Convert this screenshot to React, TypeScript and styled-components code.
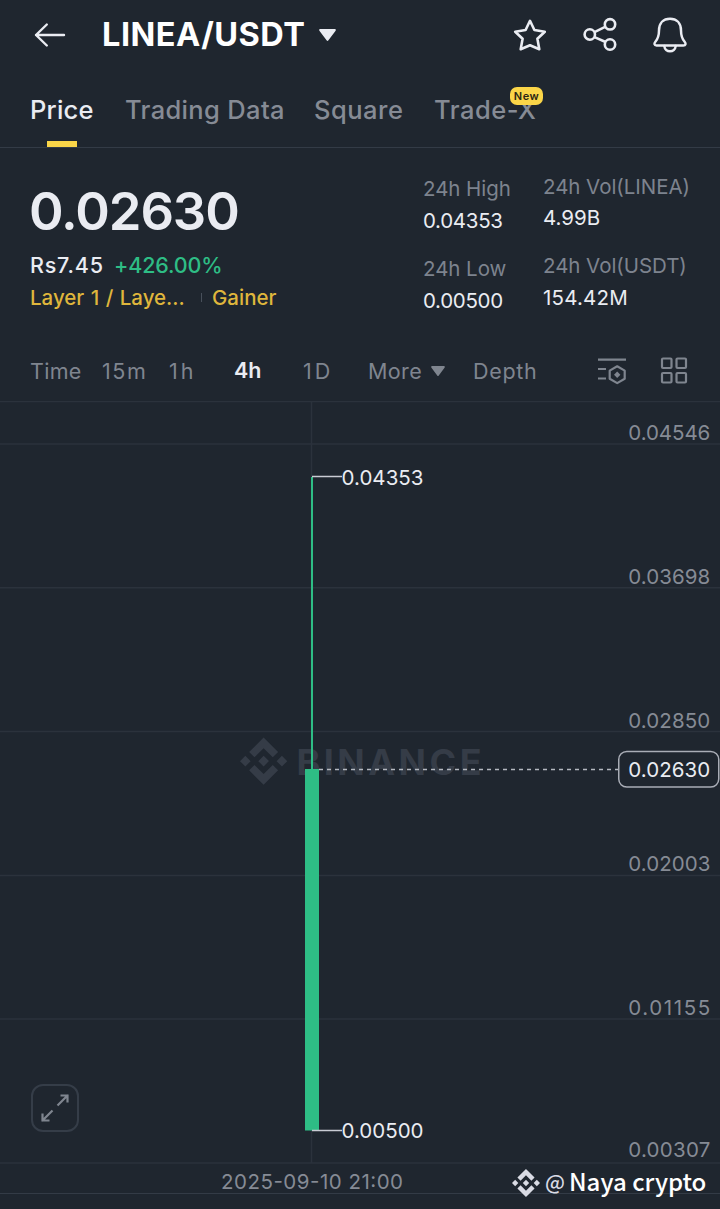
import React from "react";
import styled, { createGlobalStyle } from "styled-components";

const c = {
  bg: "#1f262f",
  text: "#eaecf2",
  muted: "#868b95",
  line: "#2b323c",
  border: "#333b46",
  green: "#2ebd85",
  yellow: "#fad548",
  gold: "#dfb63c",
};

const GlobalStyle = createGlobalStyle`
  * { box-sizing: border-box; }
  body { margin: 0; background: ${c.bg}; }
`;

const Screen = styled.main`
  width: 720px;
  height: 1209px;
  overflow: hidden;
  display: flex;
  flex-direction: column;
  background: ${c.bg};
  color: ${c.text};
  font-family: Inter, "Liberation Sans", sans-serif;
  white-space: nowrap;
`;

const Header = styled.header`
  height: 70px;
  flex: none;
  display: flex;
  align-items: center;
  padding: 0 32px 0 33px;
`;

const Title = styled.h1`
  margin: 0 0 0 35px;
  width: 217px;
  color: #fff;
  font-size: 32.5px;
  line-height: 70px;
  font-weight: 650;
  letter-spacing: 0.5px;
`;

const HeaderActions = styled.div`
  margin-left: auto;
  display: flex;
  gap: 34px;
`;

const Tabs = styled.nav`
  height: 78px;
  flex: none;
  display: grid;
  grid-template-columns: 95px 189px 120px auto;
  padding-left: 30px;
  border-bottom: 1px solid ${c.border};
`;

const Tab = styled.a<{ $active?: boolean; $track?: number }>`
  position: relative;
  justify-self: start;
  font-size: 25.5px;
  line-height: 80px;
  font-weight: 500;
  letter-spacing: ${(p) => p.$track ?? 0}px;
  color: ${(p) => (p.$active ? c.text : c.muted)};
`;

const TabMarker = styled.span`
  position: absolute;
  left: 17px;
  bottom: 3px;
  width: 30px;
  height: 6px;
  background: ${c.yellow};
`;

const NewBadge = styled.span`
  position: absolute;
  left: 76px;
  top: 17px;
  width: 33px;
  height: 18px;
  border-radius: 7px;
  background: ${c.yellow};
  color: #2a2614;
  font-size: 11px;
  line-height: 18px;
  font-weight: 600;
  letter-spacing: 0.5px;
  text-align: center;
`;

const Summary = styled.section`
  height: 192px;
  flex: none;
  display: grid;
  grid-template-columns: 393px 120px auto;
  padding-left: 30px;
`;

const PriceColumn = styled.div`
  display: flex;
  flex-direction: column;
  padding-top: 31px;
`;

const LastPrice = styled.div`
  font-size: 52.5px;
  line-height: 64px;
  font-weight: 600;
  letter-spacing: -1.1px;
  margin-left: -1px;
`;

const FiatRow = styled.div`
  display: grid;
  grid-template-columns: 84px auto;
  margin-top: 6px;
  font-size: 21.5px;
  line-height: 32px;
  font-weight: 500;
`;

const Fiat = styled.span`
  letter-spacing: 0.8px;
`;

const Change = styled.span`
  color: ${c.green};
  letter-spacing: -0.15px;
`;

const TagRow = styled.div`
  display: grid;
  grid-template-columns: 171px 11px auto;
  align-items: center;
  color: ${c.gold};
  font-size: 20.5px;
  line-height: 33px;
  font-weight: 500;
  word-spacing: 1px;
`;

const TagDivider = styled.i`
  width: 1px;
  height: 9px;
  background: #48505b;
`;

const StatColumn = styled.dl<{ $top: number; $gap: number }>`
  margin: 0;
  padding-top: ${(p) => p.$top}px;
  display: flex;
  flex-direction: column;
  gap: ${(p) => p.$gap}px;
`;

const StatLabel = styled.dt<{ $height?: number }>`
  color: #7d838e;
  font-size: 20.5px;
  line-height: ${(p) => p.$height ?? 32}px;
  letter-spacing: -0.05px;
`;

const StatValue = styled.dd<{ $track?: number; $height?: number }>`
  margin: 0;
  font-size: 20.5px;
  line-height: ${(p) => p.$height ?? 31}px;
  letter-spacing: ${(p) => p.$track ?? 0}px;
`;

const Intervals = styled.div`
  height: 61px;
  flex: none;
  display: grid;
  grid-template-columns: 72px 67px 65px 69px 65px 105px 124px 63px auto;
  align-items: center;
  padding-left: 30px;
`;

const Interval = styled.button<{ $active?: boolean; $track?: number }>`
  display: flex;
  align-items: center;
  gap: 9px;
  padding: 0 0 ${(p) => (p.$active ? 2 : 0)}px;
  border: 0;
  background: none;
  font-family: inherit;
  font-size: 21.5px;
  line-height: 40px;
  font-weight: ${(p) => (p.$active ? 600 : 400)};
  letter-spacing: ${(p) => p.$track ?? 0}px;
  color: ${(p) => (p.$active ? c.text : "#7f858f")};
`;

const ChartArea = styled.section`
  position: relative;
  height: 808px;
  flex: none;
`;

const ExpandButton = styled.button`
  position: absolute;
  left: 31px;
  top: 683px;
  width: 48px;
  height: 48px;
  padding: 0;
  display: grid;
  place-items: center;
  border: 2px solid #353d48;
  border-radius: 12px;
  background: none;
`;

const Credit = styled.div`
  position: absolute;
  left: 512px;
  top: 762px;
  height: 40px;
  display: flex;
  align-items: center;
  color: #fff;
  font-family: "Noto Sans CJK SC", "Noto Sans", sans-serif;
  font-size: 24px;
  font-weight: 500;
`;

const CreditAt = styled.span`
  width: 24px;
  margin-left: 5px;
  padding-bottom: 3px;
  font-size: 20.5px;
  line-height: 37px;
  color: #d9dbe4;
`;

const CreditName = styled.span`
  padding-bottom: 4px;
  line-height: 36px;
`;

const BINANCE_MARK =
  "M16.624 13.9202l2.7175 2.7154-7.353 7.353-7.353-7.352 2.7175-2.7164 4.6355 4.6595 4.6356-4.6595zm4.6366-4.6366L24 12l-2.7154 2.7164L18.5682 12l2.6924-2.7164zm-9.272.001l2.7163 2.6914-2.7164 2.7174v-.001L9.2721 12l2.7164-2.7154zm-9.2722-.001L5.4088 12l-2.6914 2.6924L0 12l2.7164-2.7164zM11.9885.0115l7.353 7.329-2.7174 2.7154-4.6356-4.6356-4.6355 4.6595-2.7174-2.7154 7.353-7.353z";

const BackIcon = () => (
  <svg width="34" height="30" viewBox="0 0 34 30" fill="none" stroke={c.text} strokeWidth="2.4" strokeLinecap="round" strokeLinejoin="round">
    <path d="M13.800 4.500L3 15L13.800 25.500M3 15H31" />
  </svg>
);

const StarIcon = () => (
  <svg width="36" height="36" viewBox="0 -0.8 36 36" fill="none" stroke={c.text} strokeWidth="2.600" strokeLinejoin="round">
    <path d="M18 4L22.400 13.200L32.800 14.900L25.400 22L27.300 32.400L18 28.400L8.700 32.400L10.600 22L3.200 14.900L13.600 13.200Z" />
  </svg>
);

const ShareIcon = () => (
  <svg width="36" height="36" viewBox="0 -0.5 36 36" fill="none" stroke={c.text} strokeWidth="2.600">
    <circle cx="7.800" cy="18" r="5.200" />
    <circle cx="28" cy="7.800" r="5.200" />
    <circle cx="28" cy="28" r="5.200" />
    <path d="M12.500 15.600L23.600 10.200M12.500 20.600L23.600 25.500" />
  </svg>
);

const BellIcon = () => (
  <svg width="36" height="38" viewBox="0 0 36 38" fill="none" stroke={c.text} strokeWidth="2.500" strokeLinejoin="round" strokeLinecap="round">
    <path d="M4.500 29.500H31.300C33.800 29.500 34 27.400 32.800 26C30 22.800 29 19.500 29 14.500C29 7 24.600 2.800 18 2.800S7 7 7 14.500C7 19.500 6 22.800 3.200 26C2 27.400 2.200 29.500 4.500 29.500Z" />
    <path d="M12.300 30C12.900 37 23.100 37 23.700 30" />
  </svg>
);

const Caret = ({ w, h, color }: { w: number; h: number; color: string }) => (
  <svg width={w} height={h} viewBox="0 0 18 12" preserveAspectRatio="none">
    <path d="M1.500 0H16.500C17.800 0 18.200 1 17.400 2L10 11.300C9.400 12.100 8.600 12.100 8 11.300L0.600 2C-0.200 1 0.200 0 1.500 0Z" fill={color} />
  </svg>
);

const IndicatorIcon = () => (
  <svg width="30" height="28" viewBox="0 0 30 28" fill="none" stroke="#7f858f" strokeWidth="2.200">
    <path d="M1 2.700H29M1 12H9M1 21.500H9" />
    <path d="M20.200 9.300L27.700 13.600V21.800L20.200 26.100L12.700 21.800V13.600Z" strokeLinejoin="round" />
    <path d="M20.200 14.500L23.400 17.700L20.200 20.900L17 17.700Z" fill="#7f858f" stroke="none" />
  </svg>
);

const GridIcon = () => (
  <svg width="28" height="28" viewBox="0 0.500 28 28" fill="none" stroke="#7f858f" strokeWidth="2.200">
    <rect x="2" y="2" width="9.500" height="9.500" rx="1" />
    <rect x="16.500" y="2" width="9.500" height="9.500" rx="1" />
    <rect x="2" y="16.500" width="9.500" height="9.500" rx="1" />
    <rect x="16.500" y="16.500" width="9.500" height="9.500" rx="1" />
  </svg>
);

const ExpandIcon = () => (
  <svg width="30" height="30" viewBox="0 0 30 30" fill="none" stroke="#7f858f" strokeWidth="2.200">
    <path d="M17.500 12.500L28 2M20.500 2.500H27.500V9.500M12.500 17.500L2 28M2.500 20.500V27.500H9.500" />
  </svg>
);

/* Axis rows: label, gridline y and text baseline, measured from the chart's top edge. */
const axis = [
  { label: "0.04546", line: 43, base: 38.800 },
  { label: "0.03698", line: 186.700, base: 182.800 },
  { label: "0.02850", line: 330.500, base: 327 },
  { label: "0.02003", line: 474.500, base: 469.900 },
  { label: "0.01155", line: 618, base: 613.800 },
  { label: "0.00307", line: 762, base: 755.800 },
];

const PriceChart = () => (
  <svg width="720" height="808" viewBox="0 0 720 808" fontFamily="Inter, sans-serif" fontSize="20.500" display="block">
    <g stroke={c.line} strokeWidth="1.500">
      <path d="M0 0.500H720M311.500 0V762" />
      {axis.map((a) => (
        <path key={a.label} d={`M0 ${a.line}H720`} />
      ))}
      <path d="M0 792.500H720" stroke={c.border} strokeWidth="1" />
    </g>
    <g fill="#353c47">
      <path transform="translate(240 336.500) scale(1.970)" d={BINANCE_MARK} />
      <text x="296.500" y="373.500" fontSize="36" fontWeight="750" textLength="185">BINANCE</text>
    </g>
    <rect x="311" y="76" width="2" height="293" fill={c.green} />
    <rect x="305" y="368" width="14" height="361.500" fill={c.green} />
    <path d="M312 75.500H342M312 729.500H342" stroke="#c9ccd4" strokeWidth="1.300" />
    <path d="M319 368.500H618" stroke="#b4b8c0" strokeWidth="1.500" strokeDasharray="4 4" />
    <g fill={c.text}>
      <text x="341.500" y="84" textLength="82">0.04353</text>
      <text x="341.500" y="737" textLength="82">0.00500</text>
    </g>
    <g fill={c.muted}>
      {axis.map((a) => (
        <text key={a.label} x="628.300" y={a.base} textLength="82">{a.label}</text>
      ))}
      <text x="221" y="788" textLength="182">2025-09-10 21:00</text>
    </g>
    <rect x="618.750" y="350.500" width="100" height="35.500" rx="8" fill={c.bg} stroke="#a9adb6" strokeWidth="1.500" />
    <text x="628.300" y="376" textLength="82" fill={c.text}>0.02630</text>
  </svg>
);

export default function App() {
  return (
    <Screen>
      <GlobalStyle />
      <Header>
        <BackIcon />
        <Title>LINEA/USDT</Title>
        <Caret w={17} h={12} color={c.text} />
        <HeaderActions>
          <StarIcon />
          <ShareIcon />
          <BellIcon />
        </HeaderActions>
      </Header>
      <Tabs>
        <Tab $active $track={0.2}>
          Price
          <TabMarker />
        </Tab>
        <Tab $track={0.35}>Trading Data</Tab>
        <Tab $track={0.5}>Square</Tab>
        <Tab $track={0.5}>
          Trade-X
          <NewBadge>New</NewBadge>
        </Tab>
      </Tabs>
      <Summary>
        <PriceColumn>
          <LastPrice>0.02630</LastPrice>
          <FiatRow>
            <Fiat>Rs7.45</Fiat>
            <Change>+426.00%</Change>
          </FiatRow>
          <TagRow>
            <span>Layer 1 / Laye...</span>
            <TagDivider />
            <span>Gainer</span>
          </TagRow>
        </PriceColumn>
        <StatColumn $top={25} $gap={17}>
          <div>
            <StatLabel>24h High</StatLabel>
            <StatValue $track={-0.3}>0.04353</StatValue>
          </div>
          <div>
            <StatLabel>24h Low</StatLabel>
            <StatValue $track={-0.3}>0.00500</StatValue>
          </div>
        </StatColumn>
        <StatColumn $top={23} $gap={17}>
          <div>
            <StatLabel>24h Vol(LINEA)</StatLabel>
            <StatValue $height={29}>4.99B</StatValue>
          </div>
          <div>
            <StatLabel $height={33}>24h Vol(USDT)</StatLabel>
            <StatValue $track={0.2}>154.42M</StatValue>
          </div>
        </StatColumn>
      </Summary>
      <Intervals>
        <Interval $track={0.3}>Time</Interval>
        <Interval $track={1.6}>15m</Interval>
        <Interval $track={3}>1h</Interval>
        <Interval $active>4h</Interval>
        <Interval $track={3}>1D</Interval>
        <Interval $track={0.4}>
          More
          <Caret w={14} h={10} color="#7f858f" />
        </Interval>
        <Interval $track={0.7}>Depth</Interval>
        <IndicatorIcon />
        <GridIcon />
      </Intervals>
      <ChartArea>
        <PriceChart />
        <ExpandButton aria-label="Expand chart">
          <ExpandIcon />
        </ExpandButton>
        <Credit>
          <svg width="28" height="28" viewBox="0 0 24 24" fill="#d9dbe4">
            <path d={BINANCE_MARK} />
          </svg>
          <CreditAt>@</CreditAt>
          <CreditName>Naya crypto</CreditName>
        </Credit>
      </ChartArea>
    </Screen>
  );
}
